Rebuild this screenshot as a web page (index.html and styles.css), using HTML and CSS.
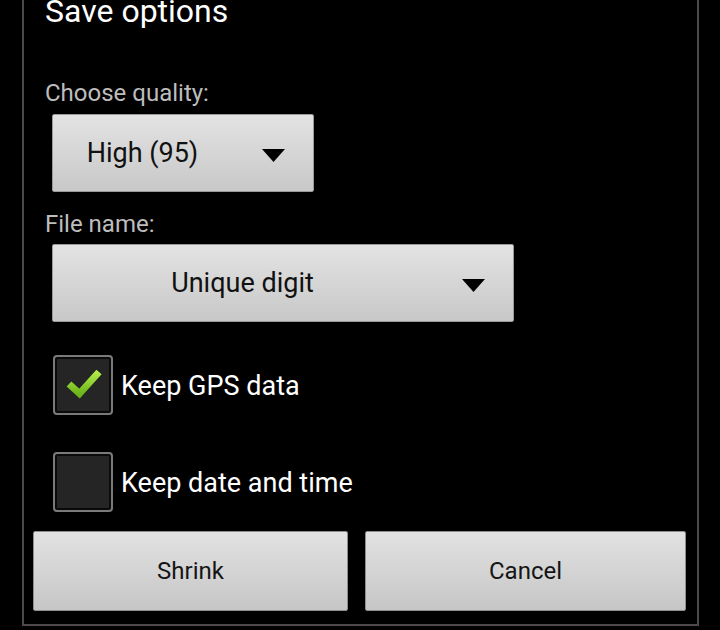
FILE: index.html
```html
<!DOCTYPE html>
<html>
<head>
<meta charset="utf-8">
<link rel="stylesheet" href="styles.css">
</head>
<body>
<div class="dialog">
  <div class="title">Save options</div>
  <div class="label label-first">Choose quality:</div>
  <div class="spinner spinner-small">
    <span class="spin-text">High (95)</span>
    <svg class="arrow" width="23" height="13" viewBox="0 0 23 13"><polygon points="0,0 23,0 11.5,13" fill="#000"/></svg>
  </div>
  <div class="label label-second">File name:</div>
  <div class="spinner spinner-wide">
    <span class="spin-text">Unique digit</span>
    <svg class="arrow" width="23" height="13" viewBox="0 0 23 13"><polygon points="0,0 23,0 11.5,13" fill="#000"/></svg>
  </div>
  <div class="check-row check-first">
    <div class="box">
      <svg width="56" height="56" viewBox="0 0 56 56">
        <defs>
          <linearGradient id="g" x1="0" y1="0" x2="0" y2="1">
            <stop offset="0" stop-color="#b2ec48"/>
            <stop offset="1" stop-color="#6cb51c"/>
          </linearGradient>
        </defs>
        <polyline points="14,27 24.5,36.5 44,15" fill="none" stroke="url(#g)" stroke-width="7" stroke-linejoin="miter"/>
      </svg>
    </div>
    <span class="check-text">Keep GPS data</span>
  </div>
  <div class="check-row check-second">
    <div class="box"></div>
    <span class="check-text">Keep date and time</span>
  </div>
  <div class="buttons">
    <div class="btn">Shrink</div>
    <div class="btn">Cancel</div>
  </div>
</div>
</body>
</html>
```
FILE: styles.css
```css
html, body {
  margin: 0;
  padding: 0;
  background: #000;
  width: 720px;
  height: 630px;
  overflow: hidden;
  font-family: Roboto, "Noto Sans", sans-serif;
}
.dialog {
  box-sizing: border-box;
  width: 677px;
  height: 626px;
  margin-left: 22px;
  border: 2px solid #4a4a4a;
  border-top: 0;
  display: flex;
  flex-direction: column;
  align-items: flex-start;
}
.title {
  color: #fff;
  font-size: 32px;
  line-height: 22px;
  padding-left: 21px;
}
.label {
  color: #bdbdbd;
  font-size: 24px;
  line-height: 28px;
  padding-left: 21px;
}
.label-first { margin-top: 57px; }
.label-second { margin-top: 18px; }
.spinner {
  box-sizing: border-box;
  height: 78px;
  margin-left: 28px;
  margin-top: 6px;
  display: flex;
  align-items: center;
  background: linear-gradient(#e3e3e3, #c8c8c8);
  border: 1px solid #9a9a9a;
  border-radius: 2px;
  color: #111;
  font-size: 27px;
}
.spinner-small { width: 262px; margin-top: 7px; }
.spinner-wide { width: 462px; }
.spin-text {
  flex: 1;
  text-align: center;
}
.arrow {
  margin-left: 30px;
  margin-right: 28px;
  margin-top: 5px;
}
.check-row {
  display: flex;
  align-items: center;
  margin-left: 29px;
  height: 60px;
}
.check-first { margin-top: 33px; }
.check-second { margin-top: 37px; }
.box {
  box-sizing: border-box;
  width: 60px;
  height: 60px;
  border: 2px solid #7a7a7a;
  border-radius: 4px;
  background: #252525;
  box-shadow: inset 0 0 0 2px #0a0a0a;
}
.box svg { display: block; }
.check-text {
  color: #fff;
  font-size: 27px;
  margin-left: 8px;
  margin-top: 2px;
}
.buttons {
  display: grid;
  grid-template-columns: 315px 321px;
  column-gap: 17px;
  margin-left: 9px;
  margin-top: 19px;
}
.btn {
  box-sizing: border-box;
  height: 80px;
  display: flex;
  align-items: center;
  justify-content: center;
  background: linear-gradient(#e2e2e2, #c6c6c6);
  border: 1px solid #8e8e8e;
  border-radius: 2px;
  color: #151515;
  font-size: 24px;
}
```
